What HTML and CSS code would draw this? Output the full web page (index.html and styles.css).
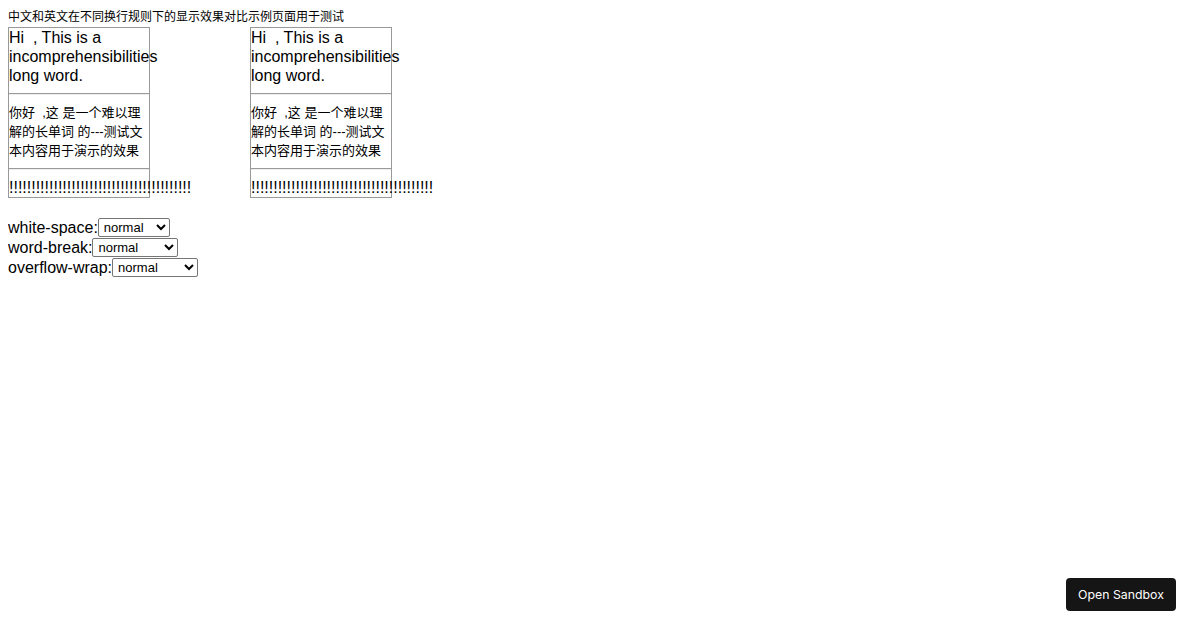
FILE: index.html
```html
<!DOCTYPE html>
<html lang="zh-CN">
<head>
<meta charset="utf-8">
<title>word-break demo</title>
<link rel="stylesheet" href="styles.css">
</head>
<body>
<div class="title">中文和英文在不同换行规则下的显示效果对比示例页面用于测试</div>
<div class="boxes">
  <div class="box">
    <div class="en">Hi&nbsp; , This is a incomprehensibilities long word.</div>
    <hr class="rule">
    <div class="zh">你好&nbsp; ,这 是一个难以理解的长单词 的---测试文本内容用于演示的效果</div>
    <hr class="rule">
    <div class="en">!!!!!!!!!!!!!!!!!!!!!!!!!!!!!!!!!!!!!!!!!</div>
  </div>
  <div class="box">
    <div class="en">Hi&nbsp; , This is a incomprehensibilities long word.</div>
    <hr class="rule">
    <div class="zh">你好&nbsp; ,这 是一个难以理解的长单词 的---测试文本内容用于演示的效果</div>
    <hr class="rule">
    <div class="en">!!!!!!!!!!!!!!!!!!!!!!!!!!!!!!!!!!!!!!!!!</div>
  </div>
</div>
<div class="controls">
  <div class="row">white-space:<select class="sel sel-ws"><option>normal</option><option>nowrap</option><option>pre</option><option>pre-wrap</option><option>pre-line</option></select></div>
  <div class="row">word-break:<select class="sel sel-wide"><option>normal</option><option>break-all</option><option>keep-all</option><option>break-word</option></select></div>
  <div class="row">overflow-wrap:<select class="sel sel-wide"><option>normal</option><option>break-word</option><option>anywhere</option></select></div>
</div>
<button class="sandbox">Open Sandbox</button>
</body>
</html>
```

FILE: styles.css
```css
html, body {
  background: #ffffff;
}
body {
  margin: 8px;
  font-family: "Liberation Sans", Arial, "Noto Sans CJK SC", sans-serif;
  font-size: 16px;
  color: #000000;
}
.title {
  font-size: 12px;
  height: 19px;
  line-height: 19px;
  font-family: "Liberation Sans", "Noto Sans CJK SC", sans-serif;
  white-space: nowrap;
}
.boxes {
  display: flex;
  gap: 100px;
  align-items: flex-start;
}
.box {
  width: 140px;
  border: 1px solid #999999;
}
.en {
  line-height: 19px;
  white-space: normal;
}
.zh {
  font-size: 13px;
  line-height: 19px;
  font-family: "Liberation Sans", "Noto Sans CJK SC", sans-serif;
}
.rule {
  margin: 8px 0;
  border: 0;
  border-top: 1px solid #9a9a9a;
  border-bottom: 1px solid #eeeeee;
  height: 0;
}
.controls {
  margin-top: 19px;
}
.row {
  height: 20px;
  display: flex;
  align-items: center;
  line-height: 19px;
}
.sel {
  font-family: "Liberation Sans", Arial, sans-serif;
  font-size: 13px;
  height: 19px;
  margin: 0;
  padding: 0 0 0 1px;
  border: 1px solid #767676;
  border-radius: 2px;
  background: #ffffff;
  color: #000000;
}
.sel-ws {
  width: 72px;
}
.sel-wide {
  width: 86px;
}
.sandbox {
  position: fixed;
  right: 24px;
  bottom: 19px;
  height: 33px;
  width: 110px;
  padding: 0;
  border: 0;
  border-radius: 4px;
  background: #151515;
  color: #ffffff;
  font-family: Inter, "Liberation Sans", sans-serif;
  font-size: 12.3px;
  line-height: 33px;
  text-align: center;
}
```
